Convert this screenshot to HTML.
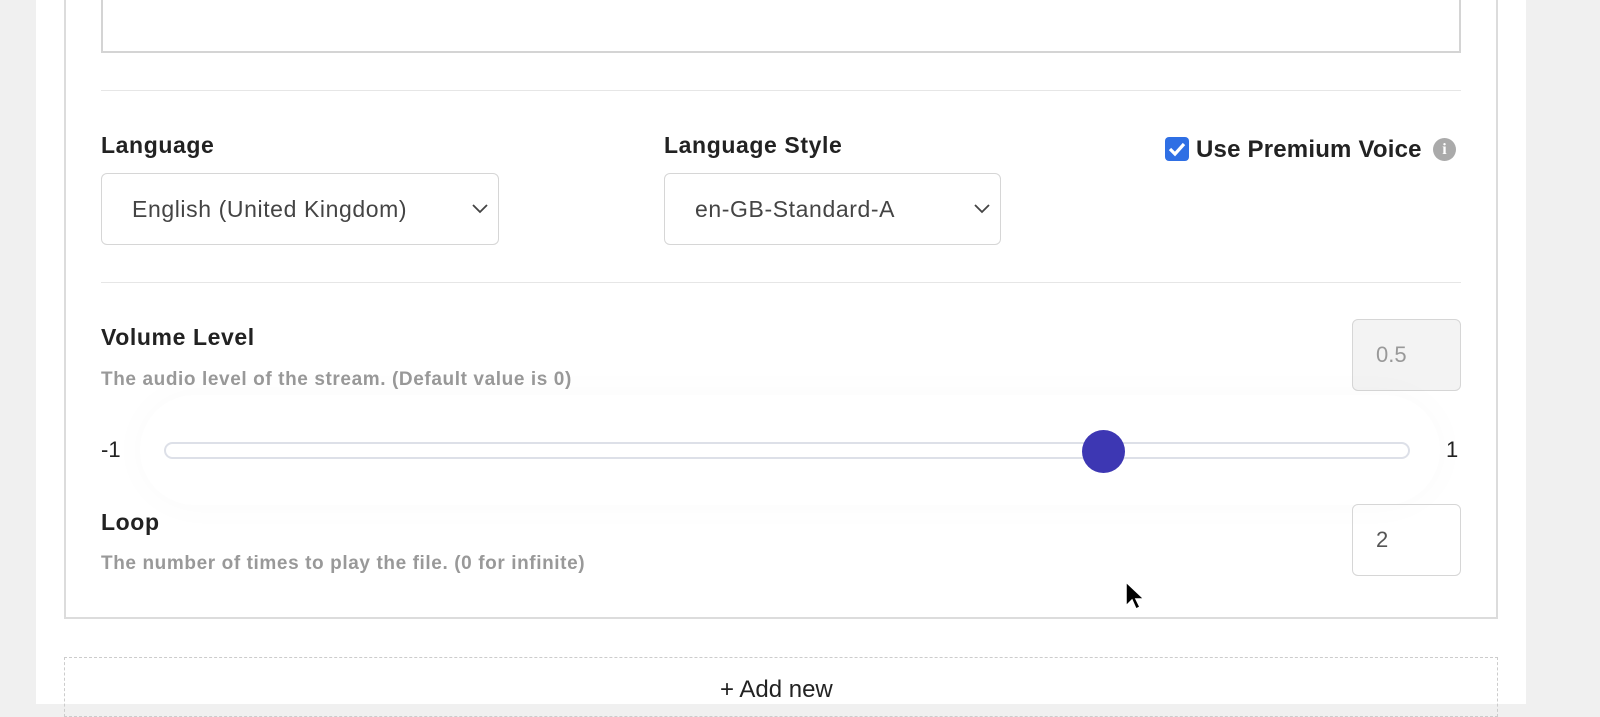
<!DOCTYPE html>
<html><head><meta charset="utf-8"><style>
*{box-sizing:border-box;margin:0;padding:0}
body{width:1600px;height:704px;overflow:hidden;background:#f0f0f0;font-family:"Liberation Sans",sans-serif;color:#222;position:relative}
.card{position:absolute;left:36px;top:0;width:1490px;height:704px;background:#fff}
.abs{position:absolute}
.panel{left:64px;top:-2px;width:1434px;height:621px;border:2px solid #dcdcdc;border-top:none;background:#fff}
.ta{left:101px;top:-2px;width:1360px;height:55px;border:2px solid #d4d4d4;border-top:none}
.hr{left:101px;width:1360px;height:1px;background:#e6e6e6}
.lbl{font-size:23px;font-weight:bold;color:#222;letter-spacing:0.6px}
.sel{height:72px;border:1px solid #d6d6d6;border-radius:6px;font-size:23px;color:#444;padding-left:30px;line-height:70px;letter-spacing:0.6px}
.sel svg{position:absolute;right:10px;top:30px}
.help{font-size:19px;font-weight:bold;color:#999;letter-spacing:0.6px}
.num{width:109px;height:72px;border:1px solid #d6d6d6;border-radius:6px;font-size:22px;color:#555;padding-left:23px;line-height:70px}
</style></head><body>
<div class="card"></div>
<div class="abs panel"></div>
<div class="abs ta"></div>
<div class="abs hr" style="top:90px"></div>
<div class="abs lbl" style="left:101px;top:132px">Language</div>
<div class="abs sel" style="left:101px;top:173px;width:398px">English (United Kingdom)<svg width="16" height="10" viewBox="0 0 16 10"><path d="M1 1l7 7 7-7" fill="none" stroke="#444" stroke-width="1.8"/></svg></div>
<div class="abs lbl" style="left:664px;top:132px">Language Style</div>
<div class="abs sel" style="left:664px;top:173px;width:337px">en-GB-Standard-A<svg width="16" height="10" viewBox="0 0 16 10"><path d="M1 1l7 7 7-7" fill="none" stroke="#444" stroke-width="1.8"/></svg></div>
<div class="abs" style="left:1165px;top:137px;width:24px;height:24px;background:#2f6fe4;border-radius:4px"><svg width="24" height="24" viewBox="0 0 24 24"><path d="M5 12l5 5 9-10" fill="none" stroke="#fff" stroke-width="3.2"/></svg></div>
<div class="abs lbl" style="left:1196px;top:136px;font-size:24px;letter-spacing:0.2px">Use Premium Voice</div>
<div class="abs" style="left:1433px;top:138px;width:23px;height:23px;border-radius:50%;background:#aaa;color:#fff;font:bold 16px 'Liberation Serif',serif;text-align:center;line-height:23px">i</div>
<div class="abs hr" style="top:282px"></div>
<div class="abs lbl" style="left:101px;top:324px">Volume Level</div>
<div class="abs help" style="left:101px;top:369px">The audio level of the stream. (Default value is 0)</div>
<div class="abs num" style="left:1352px;top:319px;background:#f3f3f3;color:#999">0.5</div>
<div class="abs" style="left:140px;top:395px;width:1300px;height:110px;border-radius:55px;box-shadow:0 0 40px rgba(0,0,0,0.025)"></div>
<div class="abs" style="left:101px;top:437px;font-size:22px">-1</div>
<div class="abs" style="left:1446px;top:437px;font-size:22px">1</div>
<div class="abs" style="left:164px;top:442px;width:1246px;height:17px;border:2px solid #dde0e8;border-radius:9px;background:#fff"></div>
<div class="abs" style="left:1082px;top:430px;width:43px;height:43px;border-radius:50%;background:#3d37b3"></div>
<div class="abs lbl" style="left:101px;top:509px">Loop</div>
<div class="abs help" style="left:101px;top:553px">The number of times to play the file. (0 for infinite)</div>
<div class="abs num" style="left:1352px;top:504px">2</div>
<div class="abs" style="left:64px;top:657px;width:1434px;height:60px;border:1px dashed #ccc"></div>
<div class="abs" style="left:720px;top:676px;font-size:24px;color:#222">+ Add new</div>
<svg class="abs" style="left:1124px;top:580px" width="20" height="34" viewBox="0 0 20 34"><path d="M2 2v24l6-6 4 9 4-2-4-8h8z" fill="#000" stroke="#fff" stroke-width="1.5"/></svg>
</body></html>
